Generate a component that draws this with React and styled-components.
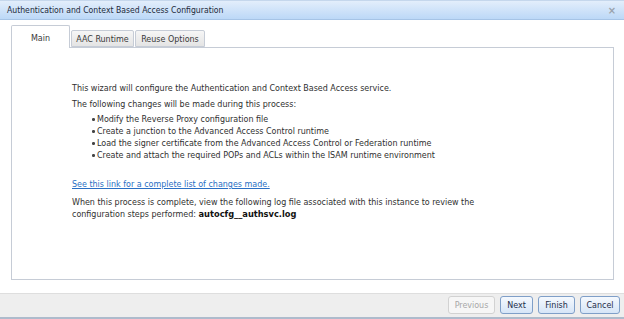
import React from "react";
import styled, { createGlobalStyle } from "styled-components";

const Global = createGlobalStyle`
  html, body { margin: 0; padding: 0; background: #fff; }
  body { font-family: "DejaVu Sans Condensed", "DejaVu Sans", sans-serif; }
`;

const Dialog = styled.div`
  width: 624px;
  height: 319px;
  display: flex;
  flex-direction: column;
  box-sizing: border-box;
  background: #fff;
`;

const TitleBar = styled.div`
  height: 20px;
  box-sizing: border-box;
  display: flex;
  align-items: center;
  justify-content: space-between;
  padding: 0 8px 0 7px;
  background: linear-gradient(#e3eefb, #bcd8f7);
  border-top: 1px solid #c5d7ec;
  border-bottom: 1px solid #a6c4e6;
`;

const Title = styled.span`
  font-size: 8.6px;
  color: #1d2a3a;
  white-space: nowrap;
`;

const Close = styled.span`
  font-size: 11px;
  font-weight: bold;
  color: #9aa3ad;
  line-height: 1;
`;

const Body = styled.div`
  flex: 1;
  display: flex;
  flex-direction: column;
  padding: 5px 10px 13px 11px;
`;

const TabStrip = styled.div`
  display: flex;
  align-items: flex-end;
  height: 22px;
  gap: 1px;
`;

const Tab = styled.div`
  box-sizing: border-box;
  height: ${(p) => (p.$active ? "23px" : "17px")};
  width: ${(p) => p.$w}px;
  margin-bottom: ${(p) => (p.$active ? "-1px" : "0")};
  display: flex;
  align-items: ${(p) => (p.$active ? "flex-end" : "center")};
  justify-content: center;
  padding-bottom: ${(p) => (p.$active ? "5px" : "0")};
  border: 1px solid #c6ccd6;
  border-bottom: ${(p) => (p.$active ? "none" : "1px solid #c6ccd6")};
  border-radius: 2px 2px 0 0;
  background: ${(p) => (p.$active ? "#fff" : "linear-gradient(#f6f6f6, #e4e4e4)")};
  font-size: 8.9px;
  color: #3a3a3a;
  position: relative;
  z-index: ${(p) => (p.$active ? 1 : 0)};
`;

const Panel = styled.div`
  flex: 1;
  border: 1px solid #c6ccd6;
  padding: 35px 20px 0 60px;
  font-size: 8.9px;
  line-height: 11px;
  color: #303030;
`;

const Para = styled.p`
  margin: 0 0 ${(p) => p.$mb || 0}px 0;
`;

const List = styled.ul`
  list-style: none;
  margin: 0 0 18px 0;
  padding: 0 0 0 20px;
  line-height: 12px;
`;

const Item = styled.li`
  position: relative;
  padding-left: 5px;
  &::before {
    content: "";
    position: absolute;
    left: 0;
    top: 5px;
    width: 2.5px;
    height: 2.5px;
    border-radius: 50%;
    background: #444;
  }
`;

const Link = styled.a`
  color: #2a6fc4;
  text-decoration: underline;
  cursor: pointer;
`;

const Bold = styled.b`
  font-weight: bold;
  color: #111;
  font-size: 9.2px;
`;

const Footer = styled.div`
  height: 26px;
  box-sizing: border-box;
  background: #eeeeee;
  border-top: 1px solid #dedede;
  border-bottom: 2px solid #aebbcc;
  display: flex;
  align-items: center;
  justify-content: flex-end;
  gap: 5px;
  padding: 0 4px 1px 0;
`;

const Button = styled.button`
  box-sizing: border-box;
  height: 18px;
  width: ${(p) => p.$w}px;
  padding: 0;
  font-family: inherit;
  font-size: 8.9px;
  border-radius: 3px;
  border: 1px solid ${(p) => (p.disabled ? "#d2d2d2" : "#7f9fc8")};
  background: ${(p) => (p.disabled ? "#f6f6f6" : "linear-gradient(#f5f9fe, #d6e5f7)")};
  color: ${(p) => (p.disabled ? "#a8a8a8" : "#1e2d4a")};
`;

const items = [
  "Modify the Reverse Proxy configuration file",
  "Create a junction to the Advanced Access Control runtime",
  "Load the signer certificate from the Advanced Access Control or Federation runtime",
  "Create and attach the required POPs and ACLs within the ISAM runtime environment",
];

export default function App() {
  return (
    <>
      <Global />
      <Dialog>
        <TitleBar>
          <Title>Authentication and Context Based Access Configuration</Title>
          <Close>×</Close>
        </TitleBar>
        <Body>
          <TabStrip>
            <Tab $active $w={59}>Main</Tab>
            <Tab $w={63}>AAC Runtime</Tab>
            <Tab $w={70}>Reuse Options</Tab>
          </TabStrip>
          <Panel>
            <Para $mb={5}>This wizard will configure the Authentication and Context Based Access service.</Para>
            <Para $mb={3}>The following changes will be made during this process:</Para>
            <List>
              {items.map((t) => (
                <Item key={t}>{t}</Item>
              ))}
            </List>
            <Para $mb={7}>
              <Link>See this link for a complete list of changes made.</Link>
            </Para>
            <Para>
              When this process is complete, view the following log file associated with this instance to review the
              <br />
              configuration steps performed: <Bold>autocfg__authsvc.log</Bold>
            </Para>
          </Panel>
        </Body>
        <Footer>
          <Button disabled $w={47}>Previous</Button>
          <Button $w={33}>Next</Button>
          <Button $w={37}>Finish</Button>
          <Button $w={40}>Cancel</Button>
        </Footer>
      </Dialog>
    </>
  );
}
